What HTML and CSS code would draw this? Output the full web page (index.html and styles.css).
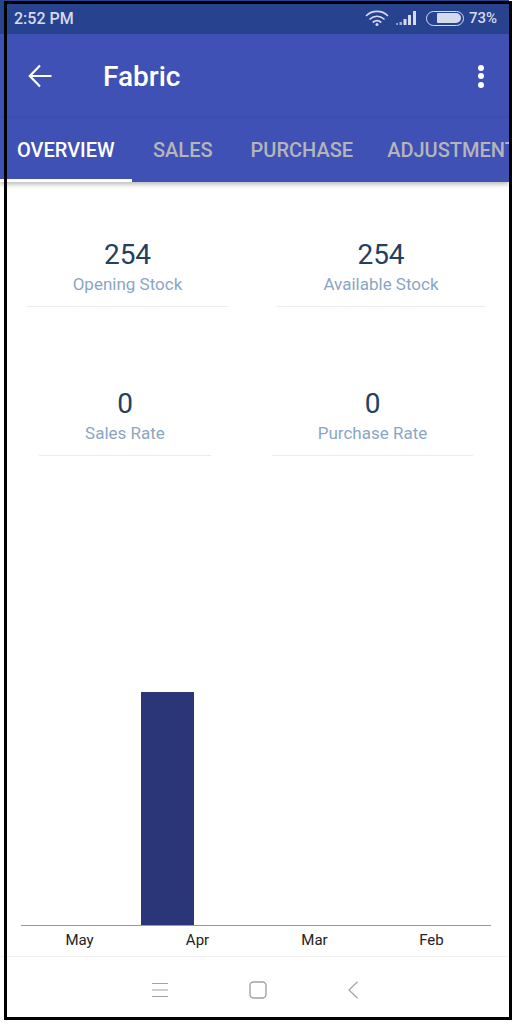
FILE: index.html
```html
<!DOCTYPE html>
<html lang="en">

<head>
    <meta charset="UTF-8">
    <meta name="viewport" content="width=device-width, initial-scale=1.0">
    <title>Fabric</title>
    <link rel="stylesheet" href="styles.css">
</head>

<body>
    <div class="screen">
        <div class="status-bar">
            <span class="time">2:52 PM</span>
            <div class="status-icons">
                <svg class="wifi" width="24" height="18" viewBox="0 0 24 18" fill="none" stroke="#d5dbee" stroke-width="1.7" stroke-linecap="round">
                    <path d="M1.5 6.5C7 1 17 1 22.5 6.5"/>
                    <path d="M5 10C9 6.3 15 6.3 19 10"/>
                    <path d="M8.3 13C10.4 11.3 13.6 11.3 15.7 13"/>
                    <circle cx="12" cy="15.5" r="1.5" fill="#d5dbee" stroke="none"/>
                </svg>
                <svg class="signal" width="22" height="16" viewBox="0 0 22 16" fill="#d5dbee">
                    <rect x="0" y="13" width="2" height="2" opacity="0.6"/>
                    <rect x="3.5" y="12" width="2.5" height="3" opacity="0.7"/>
                    <rect x="7.5" y="9" width="3" height="6"/>
                    <rect x="12" y="5" width="3" height="10"/>
                    <rect x="17" y="1" width="3" height="14"/>
                </svg>
                <div class="battery"><div class="battery-fill"></div></div>
                <span class="percent">73%</span>
            </div>
        </div>
        <header class="app-bar">
            <svg class="back" width="24" height="24" viewBox="0 0 24 24" fill="none" stroke="#fff" stroke-width="2.2">
                <path d="M23.5 12H2M12 1.5L1.8 12L12 22.5"/>
            </svg>
            <h1 class="title">Fabric</h1>
            <div class="more"><span></span><span></span><span></span></div>
        </header>
        <nav class="tabs">
            <div class="tab active">OVERVIEW</div>
            <div class="tab sales">SALES</div>
            <div class="tab purchase">PURCHASE</div>
            <div class="tab adjustment">ADJUSTMENT</div>
        </nav>
        <main class="content">
            <div class="stats first-row">
                <div class="stat opening"><div class="num">254</div><div class="label">Opening Stock</div></div>
                <div class="stat available"><div class="num">254</div><div class="label">Available Stock</div></div>
            </div>
            <div class="stats second-row">
                <div class="stat sales-rate"><div class="num">0</div><div class="label">Sales Rate</div></div>
                <div class="stat purchase-rate"><div class="num">0</div><div class="label">Purchase Rate</div></div>
            </div>
            <div class="chart">
                <div class="plot"><div class="bar"></div></div>
                <div class="months">
                    <span class="may">May</span>
                    <span class="apr">Apr</span>
                    <span class="mar">Mar</span>
                    <span class="feb">Feb</span>
                </div>
            </div>
        </main>
        <footer class="nav-bar">
            <svg width="18" height="16" viewBox="0 0 18 16" fill="none" stroke="#a3a3a3" stroke-width="1.2">
                <path d="M1 1.5H17M1 8H17M1 14.5H17"/>
            </svg>
            <svg width="18" height="18" viewBox="0 0 18 18" fill="none" stroke="#a3a3a3" stroke-width="1.4">
                <rect x="1" y="1" width="16" height="16" rx="3.5"/>
            </svg>
            <svg width="12" height="18" viewBox="0 0 12 18" fill="none" stroke="#a3a3a3" stroke-width="1.2">
                <path d="M10.5 0.8L2 9L10.5 17.2"/>
            </svg>
        </footer>
    </div>
    <div class="frame"></div>
</body>

</html>
```

FILE: styles.css
```css
* {
    box-sizing: border-box;
}

html,
body {
    margin: 0;
    height: 1024px;
    overflow: hidden;
    background: #fff;
    font-family: Roboto, sans-serif;
}

.screen {
    width: 509px;
    height: 1020px;
    overflow: hidden;
}

.frame {
    position: absolute;
    left: 4px;
    top: 1px;
    width: 508px;
    height: 1019px;
    border: 3px solid #000;
    pointer-events: none;
}

.status-bar {
    height: 34px;
    background: #27428f;
    display: flex;
    justify-content: space-between;
    align-items: center;
    padding: 2px 12px 0 14px;
    color: #d5dbee;
    font-size: 16px;
    font-weight: 500;
}

.status-icons {
    display: flex;
    align-items: center;
}

.signal {
    margin-left: 7px;
}

.battery {
    width: 38px;
    height: 15px;
    margin-left: 8px;
    border: 1.5px solid #d5dbee;
    border-radius: 8px;
    padding: 1.5px 2px 1.5px 10px;
}

.battery-fill {
    height: 100%;
    background: #d5dbee;
    border-radius: 1px 5px 5px 1px;
}

.percent {
    margin-left: 5px;
    font-size: 15px;
}

.app-bar {
    height: 84px;
    background: #3f51b5;
    display: flex;
    align-items: center;
    padding: 0 25px 0 28px;
}

.title {
    margin: 0 0 0 51px;
    flex: 1;
    color: #fff;
    font-size: 28px;
    font-weight: 500;
}

.more span {
    display: block;
    width: 6px;
    height: 6px;
    margin: 2.5px 0;
    border-radius: 50%;
    background: #fff;
}

.tabs {
    height: 64px;
    background: #3f51b5;
    display: flex;
    position: relative;
    box-shadow: 0 2px 5px rgba(0, 0, 0, 0.3);
    white-space: nowrap;
    overflow: hidden;
    font-size: 20px;
    font-weight: 500;
    color: #b5b5b9;
}

.tab {
    flex-shrink: 0;
    padding-top: 20px;
    height: 64px;
}

.tab.active {
    width: 132px;
    padding-left: 17px;
    color: #fff;
    border-bottom: 3px solid #fff;
}

.sales {
    margin-left: 21px;
}

.purchase {
    margin-left: 38px;
}

.adjustment {
    margin-left: 34px;
}

.content {
    height: 774px;
    background: #fff;
}

.stats {
    display: flex;
}

.first-row {
    padding: 54px 0 0 27px;
    gap: 49px;
}

.second-row {
    padding: 78px 0 0 39px;
    gap: 61px;
}

.stat {
    height: 71px;
    padding-top: 3px;
    text-align: center;
    border-bottom: 1px solid #e7edf3;
}

.opening {
    width: 201px;
}

.available {
    width: 208px;
}

.sales-rate {
    width: 172px;
}

.purchase-rate {
    width: 201px;
}

.num {
    font-size: 28px;
    line-height: 32px;
    color: #24405f;
}

.label {
    font-size: 17px;
    line-height: 26px;
    color: #8ba6c4;
}

.chart {
    margin: 236px 0 0 21px;
    width: 470px;
}

.plot {
    height: 234px;
    border-bottom: 1px solid #9a9a9a;
    display: flex;
    align-items: flex-end;
    padding-left: 120px;
}

.bar {
    width: 53px;
    height: 233px;
    background: #2b3679;
}

.months {
    height: 30px;
    font-size: 15px;
    line-height: 29px;
    color: #222;
    display: flex;
}

.months span {
    text-align: center;
}

.may {
    width: 117px;
}

.apr {
    width: 119px;
}

.mar {
    width: 115px;
}

.feb {
    width: 119px;
}

.nav-bar {
    height: 64px;
    border-top: 1px solid #f0f0f0;
    background: #fff;
    display: flex;
    align-items: center;
    gap: 80px;
    padding: 3px 0 0 151px;
}
```
